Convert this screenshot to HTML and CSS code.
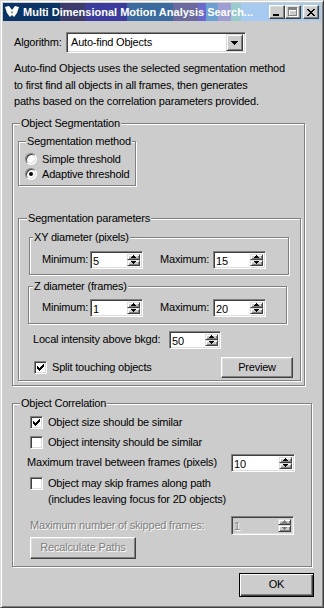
FILE: index.html
```html
<!DOCTYPE html>
<html>
<head>
<meta charset="utf-8">
<title>Multi Dimensional Motion Analysis Search</title>
<link rel="stylesheet" href="styles.css">
</head>
<body>
<div class="window">
  <div class="titlebar">
    <svg class="app-icon" width="16" height="14" viewBox="0 0 16 14"><path fill="#fff" d="M1 2 L5 1 L8 5 L11 1 L15 2 L13 8 L10 12 L8 10 L6 12 L3 8 Z"/><path fill="#0b3466" d="M7 6 L8 9 L9 6 L8 7 Z"/></svg>
    <span class="title">Multi Dimensional Motion Analysis Search...</span>
    <div class="caption-btns">
      <span class="cap-btn"><svg width="8" height="7" viewBox="0 0 8 7"><rect x="0" y="5" width="6" height="2" fill="#000"/></svg></span>
      <span class="cap-btn"><svg width="10" height="10" viewBox="0 0 10 10"><path fill="#fff" d="M1 1h9v9H1z M2 4v5h7V4z"/><path fill="#808080" d="M0 0h9v9H0z M1 3v5h7V3z" fill-rule="evenodd"/></svg></span>
      <span class="cap-btn close"><svg width="8" height="7" viewBox="0 0 8 7"><path fill="#000" d="M0 0h2v1h1v1h2V1h1V0h2v1H7v1H6v1H5v1h1v1h1v1h1v1H6V6H5V5H3v1H2v1H0V6h1V5h1V4h1V3H2V2H1V1H0z"/></svg></span>
    </div>
  </div>

  <div class="client">
    <div class="algo-row">
      <span class="algo-label">Algorithm:</span>
      <div class="combo">
        <span class="combo-text">Auto-find Objects</span>
        <span class="combo-btn"><svg width="7" height="4" viewBox="0 0 7 4"><path fill="#000" d="M0 0h7v1H6v1H5v1H4v1H3V3H2V2H1V1H0z"/></svg></span>
      </div>
    </div>

    <div class="desc">
      <div>Auto-find Objects uses the selected segmentation method</div>
      <div>to first find all objects in all frames, then generates</div>
      <div>paths based on the correlation parameters provided.</div>
    </div>

    <fieldset class="group seg">
      <legend>Object Segmentation</legend>

      <fieldset class="group method">
        <legend>Segmentation method</legend>
        <div class="opt"><span class="radio"></span><span>Simple threshold</span></div>
        <div class="opt"><span class="radio on"></span><span>Adaptive threshold</span></div>
      </fieldset>

      <fieldset class="group params">
        <legend>Segmentation parameters</legend>

        <fieldset class="group dia xy">
          <legend>XY diameter (pixels)</legend>
          <div class="range-row">
            <span class="lbl-min">Minimum:</span>
            <div class="spin w53"><span class="val">5</span><span class="spin-btns"><span class="sb"><svg width="5" height="3" viewBox="0 0 5 3"><path d="M2 0h1v1h1v1h1v1H0V2h1V1h1z"/></svg></span><span class="sb"><svg width="5" height="3" viewBox="0 0 5 3"><path d="M0 0h5v1H4v1H3v1H2V2H1V1H0z"/></svg></span></span></div>
            <span class="lbl-max">Maximum:</span>
            <div class="spin w53"><span class="val">15</span><span class="spin-btns"><span class="sb"><svg width="5" height="3" viewBox="0 0 5 3"><path d="M2 0h1v1h1v1h1v1H0V2h1V1h1z"/></svg></span><span class="sb"><svg width="5" height="3" viewBox="0 0 5 3"><path d="M0 0h5v1H4v1H3v1H2V2H1V1H0z"/></svg></span></span></div>
          </div>
        </fieldset>

        <fieldset class="group dia z">
          <legend>Z diameter (frames)</legend>
          <div class="range-row">
            <span class="lbl-min">Minimum:</span>
            <div class="spin w53"><span class="val">1</span><span class="spin-btns"><span class="sb"><svg width="5" height="3" viewBox="0 0 5 3"><path d="M2 0h1v1h1v1h1v1H0V2h1V1h1z"/></svg></span><span class="sb"><svg width="5" height="3" viewBox="0 0 5 3"><path d="M0 0h5v1H4v1H3v1H2V2H1V1H0z"/></svg></span></span></div>
            <span class="lbl-max">Maximum:</span>
            <div class="spin w53"><span class="val">20</span><span class="spin-btns"><span class="sb"><svg width="5" height="3" viewBox="0 0 5 3"><path d="M2 0h1v1h1v1h1v1H0V2h1V1h1z"/></svg></span><span class="sb"><svg width="5" height="3" viewBox="0 0 5 3"><path d="M0 0h5v1H4v1H3v1H2V2H1V1H0z"/></svg></span></span></div>
          </div>
        </fieldset>

        <div class="local-row">
          <span class="local-label">Local intensity above bkgd:</span>
          <div class="spin w52"><span class="val">50</span><span class="spin-btns"><span class="sb"><svg width="5" height="3" viewBox="0 0 5 3"><path d="M2 0h1v1h1v1h1v1H0V2h1V1h1z"/></svg></span><span class="sb"><svg width="5" height="3" viewBox="0 0 5 3"><path d="M0 0h5v1H4v1H3v1H2V2H1V1H0z"/></svg></span></span></div>
        </div>

        <div class="split-row">
          <span class="cb"><svg width="7" height="7" viewBox="0 0 7 7"><path fill="#000" d="M6 0h1v3H6v1H5v1H4v1H3v1H2V6H1V5H0V2h1v1h1v1h1V3h1V2h1V1h1z"/></svg></span>
          <span class="cb-label">Split touching objects</span>
          <button class="btn preview">Preview</button>
        </div>
      </fieldset>
    </fieldset>

    <fieldset class="group corr">
      <legend>Object Correlation</legend>
      <div class="chk-row r1">
        <span class="cb"><svg width="7" height="7" viewBox="0 0 7 7"><path fill="#000" d="M6 0h1v3H6v1H5v1H4v1H3v1H2V6H1V5H0V2h1v1h1v1h1V3h1V2h1V1h1z"/></svg></span>
        <span class="cb-label">Object size should be similar</span>
      </div>
      <div class="chk-row r2">
        <span class="cb"></span>
        <span class="cb-label">Object intensity should be similar</span>
      </div>
      <div class="travel-row">
        <span class="travel-label">Maximum travel between frames (pixels)</span>
        <div class="spin w64"><span class="val">10</span><span class="spin-btns"><span class="sb"><svg width="5" height="3" viewBox="0 0 5 3"><path d="M2 0h1v1h1v1h1v1H0V2h1V1h1z"/></svg></span><span class="sb"><svg width="5" height="3" viewBox="0 0 5 3"><path d="M0 0h5v1H4v1H3v1H2V2H1V1H0z"/></svg></span></span></div>
      </div>
      <div class="chk-row skip">
        <span class="cb"></span>
        <span class="cb-label two-line">Object may skip frames along path<br>(includes leaving focus for 2D objects)</span>
      </div>
      <div class="skipped-row">
        <span class="skipped-label disabled">Maximum number of skipped frames:</span>
        <div class="spin w63 off"><span class="val disabled">1</span><span class="spin-btns"><span class="sb"><svg width="5" height="3" viewBox="0 0 5 3"><path fill="#808080" d="M2 0h1v1h1v1h1v1H0V2h1V1h1z"/></svg></span><span class="sb"><svg width="5" height="3" viewBox="0 0 5 3"><path fill="#808080" d="M0 0h5v1H4v1H3v1H2V2H1V1H0z"/></svg></span></span></div>
      </div>
      <button class="btn recalc disabled">Recalculate Paths</button>
    </fieldset>

    <div class="footer">
      <button class="btn ok">OK</button>
    </div>
  </div>
</div>
</body>
</html>
```

FILE: styles.css
```css
* { box-sizing: border-box; }
html, body { margin: 0; padding: 0; }
body {
  width: 324px;
  height: 608px;
  overflow: hidden;
  background: #cccccc;
  color: #000;
  font: 11px/13px "Liberation Sans", Arial, sans-serif;
  letter-spacing: -0.2px;
}

.window {
  width: 324px;
  height: 608px;
  border: 1px solid;
  border-color: #dcdcdc #404040 #404040 #dcdcdc;
  box-shadow: inset 1px 1px #ffffff, inset -1px -1px #808080;
  padding: 2px;
  display: flex;
  flex-direction: column;
}

/* ---------- title bar ---------- */
.titlebar {
  height: 18px;
  flex: none;
  display: flex;
  align-items: center;
  padding: 0 2px 0 1px;
  background: linear-gradient(to right,
    #0b3466 0 57px,
    #3b3b6c 57px 82px,
    #3b3b9e 82px 124px,
    #3b6b9e 124px 170px,
    #6a6a9e 170px 195px,
    #6a6acc 195px 203px,
    #6c9fd2 203px 215px,
    #9e9ed2 215px 228px,
    #99cccc 228px 238px,
    #a6caf0 238px 100%);
}
.app-icon { flex: none; }
.title {
  flex: 1;
  margin-left: 3px;
  color: #fff;
  font-weight: bold;
  font-size: 11px;
  letter-spacing: 0;
  white-space: nowrap;
  overflow: hidden;
}
.caption-btns { display: flex; flex: none; }
.cap-btn {
  width: 16px;
  height: 14px;
  background: #cccccc;
  border: 1px solid;
  border-color: #ffffff #404040 #404040 #ffffff;
  box-shadow: inset -1px -1px #808080, inset 1px 1px #dcdcdc;
  display: flex;
  align-items: center;
  justify-content: center;
}
.cap-btn.close { margin-left: 2px; }

/* ---------- client ---------- */
.client {
  flex: 1;
  display: flex;
  flex-direction: column;
  padding-left: 9px;
}

.algo-row {
  display: flex;
  align-items: center;
  margin: 11px 0 0 2px;
}
.algo-label { width: 52px; }
.combo {
  width: 180px;
  height: 21px;
  background: #fff;
  border: 1px solid;
  border-color: #808080 #ffffff #ffffff #808080;
  box-shadow: inset 1px 1px #404040, inset -1px -1px #dcdcdc;
  padding: 2px;
  display: flex;
  align-items: center;
}
.combo-text { flex: 1; padding-left: 2px; }
.combo-btn {
  width: 17px;
  height: 17px;
  background: #cccccc;
  border: 1px solid;
  border-color: #dcdcdc #404040 #404040 #dcdcdc;
  box-shadow: inset 1px 1px #ffffff, inset -1px -1px #808080;
  display: flex;
  align-items: center;
  justify-content: center;
}

.desc {
  margin: 7px 0 0 2px;
  line-height: 16.5px;
  white-space: nowrap;
}

/* ---------- group boxes ---------- */
fieldset.group {
  margin: 0;
  padding: 0;
  min-width: 0;
  border: 1px solid #808080;
  box-shadow: inset 1px 1px #ffffff, 1px 1px #ffffff;
}
fieldset.group > legend {
  padding: 0 1px;
  line-height: 13px;
  background: #cccccc;
  white-space: nowrap;
}

.seg { width: 293px; margin-top: 7px !important; padding-bottom: 4px !important; }
.seg > legend { margin-left: 7px; }

.method { width: 118px; margin: 5px 0 0 5px !important; padding: 4px 0 3px !important; }
.method > legend { margin-left: 7px; }
.opt { display: flex; align-items: center; height: 15px; padding-left: 6px; white-space: nowrap; }
.radio {
  width: 12px;
  height: 12px;
  border-radius: 50%;
  background: #fff;
  border: 1px solid;
  border-color: #808080 #ffffff #ffffff #808080;
  box-shadow: inset 1px 1px #404040, inset -1px -1px #dcdcdc;
  margin-right: 5px;
  display: flex;
  align-items: center;
  justify-content: center;
}
.radio.on::after {
  content: "";
  width: 4px;
  height: 4px;
  border-radius: 50%;
  background: #000;
}

.params { width: 283px; margin: 26px 0 0 5px !important; padding-bottom: 2px !important; }
.params > legend { margin-left: 8px; padding-right: 9px; }

.dia > legend { padding-right: 3px; }
.xy { width: 260px; margin: 6px 0 0 10px !important; padding-bottom: 5px !important; }
.xy > legend { margin-left: 3px; }
.z { width: 259px; margin: 5px 0 0 9px !important; padding-bottom: 6px !important; }
.z > legend { margin-left: 4px; padding-right: 1px; }

.range-row { display: flex; align-items: center; margin-top: 7px; padding-left: 12px; }
.z .range-row { margin-top: 6px; padding-left: 13px; }
.lbl-min { width: 48px; }
.lbl-max { width: 53px; margin-left: 17px; }

.spin {
  height: 18px;
  background: #fff;
  border: 1px solid;
  border-color: #808080 #ffffff #ffffff #808080;
  box-shadow: inset 1px 1px #404040, inset -1px -1px #dcdcdc;
  padding: 2px 1px 2px 1px;
  display: flex;
}
.spin.off { background: #cccccc; }
.w52 { width: 52px; }
.w53 { width: 53px; }
.w63 { width: 63px; }
.w64 { width: 64px; }
.val { flex: 1; line-height: 14px; padding-left: 1px; }
.spin-btns { width: 13px; display: flex; flex-direction: column; margin-right: 1px; }
.sb {
  flex: 1;
  background: #cccccc;
  border: 1px solid;
  border-color: #dcdcdc #404040 #404040 #dcdcdc;
  box-shadow: inset 1px 1px #ffffff, inset -1px -1px #808080;
  display: flex;
  align-items: center;
  justify-content: center;
}
.sb svg { fill: #000; }

.local-row { display: flex; align-items: center; margin: 7px 0 0 14px; }
.local-label { width: 136px; }

.split-row { display: flex; align-items: center; margin: 8px 7px 0 15px; }
.cb {
  width: 13px;
  height: 13px;
  flex: none;
  background: #fff;
  border: 1px solid;
  border-color: #808080 #ffffff #ffffff #808080;
  box-shadow: inset 1px 1px #404040, inset -1px -1px #dcdcdc;
  display: flex;
  align-items: center;
  justify-content: center;
}
.cb-label { margin-left: 5px; white-space: nowrap; }

.btn {
  font: inherit;
  letter-spacing: inherit;
  color: #000;
  margin: 0;
  padding: 0;
  background: #cccccc;
  border: 1px solid;
  border-color: #ffffff #404040 #404040 #ffffff;
  box-shadow: inset -1px -1px #808080, inset 1px 1px #dcdcdc;
  display: flex;
  align-items: center;
  justify-content: center;
}
.preview { width: 72px; height: 21px; margin-left: auto; }

.disabled { color: #808080; text-shadow: 1px 1px #ffffff; }

/* ---------- correlation ---------- */
.corr { width: 300px; margin-top: 11px !important; padding-bottom: 7px !important; }
.corr > legend { margin-left: 7px; }
.chk-row { display: flex; align-items: center; margin-left: 17px; height: 16px; }
.chk-row.r1 { margin-top: 5px; }
.chk-row.r2 { margin-top: 4px; }
.chk-row.skip { margin-top: 3px; height: auto; align-items: flex-start; }
.chk-row.skip .cb { margin-top: 2px; }
.two-line { line-height: 16px; }
.travel-row { display: flex; align-items: center; margin: 3px 0 0 14px; white-space: nowrap; }
.travel-label { width: 204px; }
.skipped-row { display: flex; align-items: center; margin: 9px 0 0 17px; white-space: nowrap; }
.skipped-label { width: 201px; }
.skipped-row .spin { height: 19px; }
.recalc { width: 106px; height: 22px; margin: 2px 0 0 17px; }

.footer { display: flex; justify-content: flex-end; padding-right: 7px; margin-top: 6px; }
.ok {
  width: 75px;
  height: 24px;
  border: 1px solid #000;
  box-shadow: inset 1px 1px #ffffff, inset -1px -1px #404040, inset -2px -2px #808080;
}
```
